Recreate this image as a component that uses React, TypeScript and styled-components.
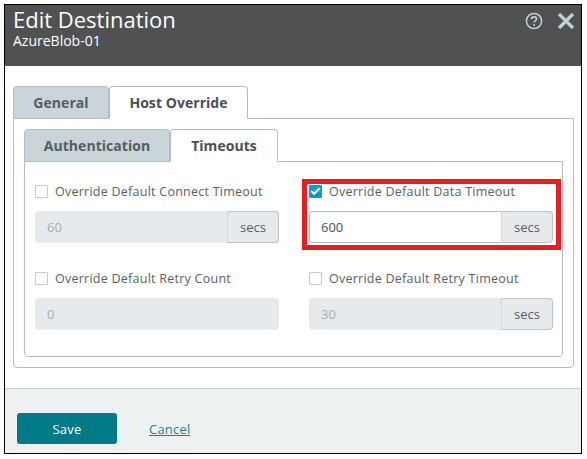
import React from "react";
import styled, { createGlobalStyle } from "styled-components";
import { Check } from "lucide-react";

const GlobalStyle = createGlobalStyle`
  html, body {
    margin: 0;
    padding: 0;
    background: #fff;
  }
  * {
    box-sizing: border-box;
  }
`;

const Page = styled.div`
  width: 587px;
  height: 459px;
  padding: 4px 0 0 4px;
  overflow: hidden;
  font-family: "Open Sans", "Liberation Sans", sans-serif;
`;

const Dialog = styled.div`
  width: 578px;
  height: 450px;
  border: 1px solid #000;
  background: #fff;
  display: flex;
  flex-direction: column;
`;

const Header = styled.header`
  height: 61px;
  flex: none;
  background: #505153;
  color: #fff;
  padding: 2px 8px 0;
  display: flex;
  justify-content: space-between;
`;

const Title = styled.div`
  font-size: 22px;
  line-height: 24px;
`;

const Subtitle = styled.div`
  font-size: 14px;
  line-height: 18px;
  margin-top: 1px;
`;

const HeaderIcons = styled.div`
  display: flex;
  align-items: flex-start;
  gap: 14px;
  margin: 5px -2px 0 0;
  color: #c3d0d6;
`;

const Body = styled.div`
  flex: 1;
  padding: 20px 7px 0 8px;
`;

const TabRow = styled.div`
  display: flex;
  height: 33px;
  margin-bottom: -1px;
  position: relative;
`;

const Tab = styled.div<{ $active?: boolean; $width: number }>`
  width: ${(p) => p.$width}px;
  height: 33px;
  display: flex;
  align-items: center;
  justify-content: center;
  font-size: 14px;
  font-weight: 700;
  letter-spacing: 0.05px;
  border: 1px solid #b3bec3;
  border-radius: 4px 4px 0 0;
  border-bottom-color: ${(p) => (p.$active ? "#fff" : "#b3bec3")};
  background: ${(p) => (p.$active ? "#fff" : "#c9d5d8")};
  color: ${(p) => (p.$active ? "#4a4f55" : "#565c62")};
`;

const TabPanel = styled.div<{ $height: number; $pad?: boolean }>`
  height: ${(p) => p.$height}px;
  border: 1px solid #b3bec3;
  border-radius: 0 0 4px 4px;
  padding: ${(p) => (p.$pad ? "10px" : "19px 10px 0 10px")};
`;

const FieldGrid = styled.div`
  display: grid;
  grid-template-columns: 244px 244px;
  column-gap: 30px;
  row-gap: 25px;
  position: relative;
`;

const Field = styled.div`
  display: flex;
  flex-direction: column;
  gap: 9px;
`;

const CheckRow = styled.label`
  display: flex;
  align-items: center;
  gap: 7px;
  height: 21px;
  font-size: 12.5px;
  letter-spacing: 0.25px;
  color: #5a5f65;
`;

const Box = styled.span<{ $checked?: boolean }>`
  width: 13px;
  height: 13px;
  flex: none;
  display: flex;
  align-items: center;
  justify-content: center;
  border: 1px solid ${(p) => (p.$checked ? "#0c9cc8" : "#c3cbcf")};
  border-radius: 1px;
  background: ${(p) => (p.$checked ? "#0c9cc8" : "#fff")};
  color: #fff;
`;

const InputGroup = styled.div`
  height: 32px;
  display: flex;
`;

const Value = styled.div<{ $disabled?: boolean; $alone?: boolean }>`
  flex: 1;
  padding-left: 11px;
  font-size: 13px;
  line-height: 30px;
  border: 1px solid ${(p) => (p.$disabled ? "#e7eaec" : "#b3bec3")};
  border-right-width: ${(p) => (p.$alone ? "1px" : "0")};
  border-radius: ${(p) => (p.$alone ? "4px" : "4px 0 0 4px")};
  background: ${(p) => (p.$disabled ? "#e7eaec" : "#fff")};
  color: ${(p) => (p.$disabled ? "#a9adb0" : "#4c5157")};
`;

const Unit = styled.div`
  width: 52px;
  flex: none;
  display: flex;
  align-items: center;
  justify-content: center;
  font-size: 13px;
  color: #565c62;
  background: #e7eaec;
  border: 1px solid #b9c3c8;
  border-left-color: #d3dade;
  border-radius: 0 4px 4px 0;
`;

const Highlight = styled.div`
  position: absolute;
  left: 267px;
  top: -2px;
  width: 259px;
  height: 71px;
  border: 5px solid #ed1c24;
  pointer-events: none;
`;

const Footer = styled.footer`
  flex: none;
  height: 65px;
  background: #eef1f2;
  border-top: 1px solid #c9d5d8;
  display: flex;
  align-items: flex-start;
  padding: 24px 0 0 12px;
`;

const SaveButton = styled.button`
  width: 100px;
  height: 31px;
  border: none;
  border-radius: 3px;
  background: #007a87;
  color: #fff;
  font: 13px "Open Sans", "Liberation Sans", sans-serif;
  letter-spacing: 0.2px;
`;

const CancelLink = styled.a`
  margin: 7px 0 0 32px;
  font-size: 13px;
  letter-spacing: 0.2px;
  color: #1f7f8f;
  text-decoration: underline;
`;

type FieldProps = {
  label: string;
  value: string;
  checked?: boolean;
  unit?: boolean;
};

const TimeoutField = ({ label, value, checked, unit = true }: FieldProps) => (
  <Field>
    <CheckRow>
      <Box $checked={checked}>
        {checked && <Check size={11} strokeWidth={4.5} />}
      </Box>
      {label}
    </CheckRow>
    <InputGroup>
      <Value $disabled={!checked} $alone={!unit}>{value}</Value>
      {unit && <Unit>secs</Unit>}
    </InputGroup>
  </Field>
);

const App = () => (
  <Page>
    <GlobalStyle />
    <Dialog>
      <Header>
        <div>
          <Title>Edit Destination</Title>
          <Subtitle>AzureBlob-01</Subtitle>
        </div>
        <HeaderIcons>
          <svg width="18" height="18" viewBox="0 0 19 19" fill="none" stroke="currentColor">
            <circle cx="9.5" cy="9.5" r="8" strokeWidth="1.6" />
            <path d="M6.9 7.6c0-1.6 1.2-2.5 2.7-2.5s2.6.9 2.6 2.2c0 2-2.6 2-2.6 3.9" strokeWidth="1.7" />
            <path d="M9.6 12.6v1.8" strokeWidth="1.8" />
          </svg>
          <svg width="18" height="18" viewBox="0 0 18 18" fill="none" stroke="currentColor">
            <path d="M2 2l14 14M16 2L2 16" strokeWidth="3.2" />
          </svg>
        </HeaderIcons>
      </Header>
      <Body>
        <TabRow>
          <Tab $width={96}>General</Tab>
          <Tab $width={139} $active>Host Override</Tab>
        </TabRow>
        <TabPanel $height={250} $pad>
          <TabRow>
            <Tab $width={146}>Authentication</Tab>
            <Tab $width={108} $active>Timeouts</Tab>
          </TabRow>
          <TabPanel $height={196}>
            <FieldGrid>
              <TimeoutField label="Override Default Connect Timeout" value="60" />
              <TimeoutField label="Override Default Data Timeout" value="600" checked />
              <TimeoutField label="Override Default Retry Count" value="0" unit={false} />
              <TimeoutField label="Override Default Retry Timeout" value="30" />
              <Highlight />
            </FieldGrid>
          </TabPanel>
        </TabPanel>
      </Body>
      <Footer>
        <SaveButton>Save</SaveButton>
        <CancelLink>Cancel</CancelLink>
      </Footer>
    </Dialog>
  </Page>
);

export default App;
